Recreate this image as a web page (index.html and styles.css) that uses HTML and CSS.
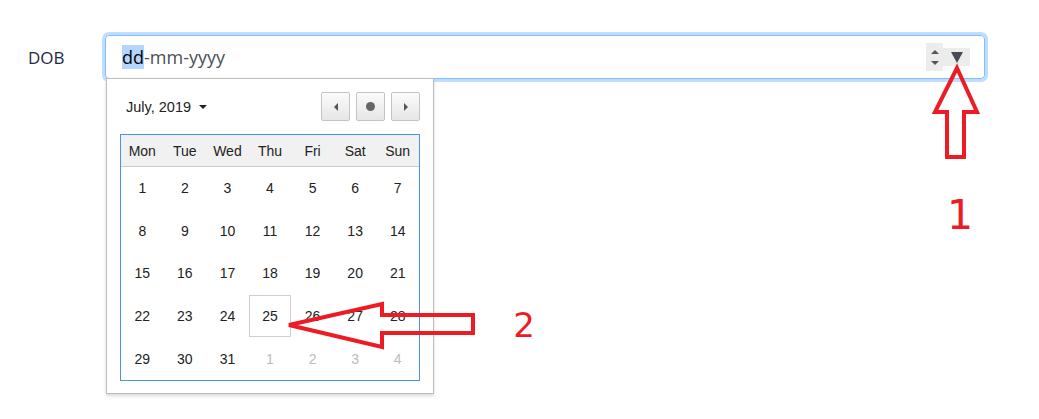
FILE: index.html
```html
<!DOCTYPE html>
<html lang="en">
<head>
  <meta charset="UTF-8">
  <title>DOB date picker</title>
  <link rel="stylesheet" href="styles.css">
</head>
<body>
<div class="page">

  <!-- date of birth field -->
  <div class="field-row">
    <label class="field-label">DOB</label>
    <div class="date-wrap">
      <div class="date-input">
        <span class="date-text"><span class="sel">dd</span>-mm-yyyy</span>
        <span class="spin"><i class="spin-up"></i><i class="spin-down"></i></span>
        <span class="drop"><i class="drop-arrow"></i></span>
      </div>

      <!-- calendar popup -->
      <div class="calendar">
        <div class="cal-head">
          <div class="cal-month">July, 2019 <i class="caret"></i></div>
          <div class="cal-nav">
            <button class="nav-btn"><i class="tri-left"></i></button>
            <button class="nav-btn"><i class="dot"></i></button>
            <button class="nav-btn"><i class="tri-right"></i></button>
          </div>
        </div>
        <div class="cal-grid">
          <div class="dow">Mon</div><div class="dow">Tue</div><div class="dow">Wed</div><div class="dow">Thu</div><div class="dow">Fri</div><div class="dow">Sat</div><div class="dow">Sun</div>
          <div class="day">1</div><div class="day">2</div><div class="day">3</div><div class="day">4</div><div class="day">5</div><div class="day">6</div><div class="day">7</div>
          <div class="day">8</div><div class="day">9</div><div class="day">10</div><div class="day">11</div><div class="day">12</div><div class="day">13</div><div class="day">14</div>
          <div class="day">15</div><div class="day">16</div><div class="day">17</div><div class="day">18</div><div class="day">19</div><div class="day">20</div><div class="day">21</div>
          <div class="day">22</div><div class="day">23</div><div class="day">24</div><div class="day today">25</div><div class="day">26</div><div class="day">27</div><div class="day">28</div>
          <div class="day">29</div><div class="day">30</div><div class="day">31</div><div class="day other">1</div><div class="day other">2</div><div class="day other">3</div><div class="day other">4</div>
        </div>
      </div>
    </div>
  </div>

  <!-- annotations -->
  <svg class="marks" width="1039" height="419" viewBox="0 0 1039 419">
    <polygon points="957,68 977,112 964,112 964,157 947,157 947,112 935,112" />
    <polygon points="289,325 382,304 382,315 473,315 473,333 382,333 382,347" />
    <text x="960" y="229" font-size="41">1</text>
    <text x="524" y="337" font-size="34">2</text>
  </svg>

</div>
</body>
</html>
```

FILE: styles.css
```css
body {
  margin: 0;
  background: #fff;
  font-family: "Open Sans", "Noto Sans", sans-serif;
}
.page {
  position: relative;
  height: 419px;
}
.field-row {
  display: flex;
  align-items: center;
  padding: 35px 0 0 28px;
}
.field-label {
  width: 77px;
  font-size: 17px;
  color: #1d2a44;
}
.date-wrap {
  position: relative;
  width: 880px;
}
.date-input {
  box-sizing: border-box;
  height: 44px;
  display: flex;
  align-items: center;
  padding: 0 14px 0 16px;
  border: 1px solid #80bdff;
  border-radius: 4px;
  box-shadow: 0 0 0 3px rgba(0, 123, 255, .25);
  font-size: 18px;
  color: #495057;
}
.date-text {
  flex: 1;
}
.sel {
  background: #b4d5fe;
  color: #000;
}
.spin {
  width: 17px;
  height: 28px;
  background: #ececec;
  display: flex;
  flex-direction: column;
  align-items: center;
  justify-content: center;
  gap: 7px;
}
.spin-up, .spin-down {
  width: 0;
  height: 0;
  border-left: 4px solid transparent;
  border-right: 4px solid transparent;
}
.spin-up {
  border-bottom: 4px solid #555;
}
.spin-down {
  border-top: 4px solid #555;
}
.drop {
  width: 27px;
  height: 18px;
  background: #ececec;
  display: flex;
  align-items: center;
  justify-content: center;
}
.drop-arrow {
  width: 0;
  height: 0;
  border-left: 6px solid transparent;
  border-right: 6px solid transparent;
  border-top: 11px solid #474c52;
}

/* calendar */
.calendar {
  position: absolute;
  left: 1px;
  top: 43px;
  width: 328px;
  box-sizing: border-box;
  padding: 13px 13px 12px;
  background: #fff;
  border: 1px solid #bdbdbd;
  box-shadow: 0 2px 3px rgba(0, 0, 0, .15);
  font-family: "Liberation Sans", Arial, sans-serif;
  font-size: 14px;
  color: #222;
}
.cal-head {
  display: flex;
  justify-content: space-between;
  align-items: center;
  height: 29px;
  margin-bottom: 13px;
}
.cal-month {
  padding-left: 6px;
  font-size: 14.5px;
  display: flex;
  align-items: center;
}
.caret {
  margin-left: 8px;
  width: 0;
  height: 0;
  border-left: 4px solid transparent;
  border-right: 4px solid transparent;
  border-top: 4px solid #222;
}
.cal-nav {
  display: flex;
  gap: 6px;
}
.nav-btn {
  width: 29px;
  height: 29px;
  padding: 0;
  border: 1px solid #c4c4c4;
  border-radius: 2px;
  background: linear-gradient(#fbfbfb, #e6e6e6);
  display: flex;
  align-items: center;
  justify-content: center;
}
.tri-left, .tri-right {
  width: 0;
  height: 0;
  border-top: 4px solid transparent;
  border-bottom: 4px solid transparent;
}
.tri-left {
  border-right: 4px solid #555;
}
.tri-right {
  border-left: 4px solid #555;
}
.dot {
  width: 9px;
  height: 9px;
  border-radius: 50%;
  background: #666;
}
.cal-grid {
  display: grid;
  grid-template-columns: repeat(7, 1fr);
  grid-template-rows: 32px repeat(5, 42.6px);
  border: 1px solid #4e90f2;
}
.dow {
  display: flex;
  align-items: center;
  justify-content: center;
  background: #f1f1f1;
  border-bottom: 1px solid #cbcbcb;
}
.day {
  display: flex;
  align-items: center;
  justify-content: center;
  box-sizing: border-box;
}
.day.today {
  border: 1px solid #cfcfcf;
}
.day.other {
  color: #bbb;
}

/* annotations */
.marks {
  position: absolute;
  left: 0;
  top: 0;
  pointer-events: none;
}
.marks polygon {
  fill: none;
  stroke: #ed1c24;
  stroke-width: 4;
  stroke-linejoin: miter;
}
.marks text {
  fill: #ed1c24;
  font-family: "DejaVu Sans", sans-serif;
  text-anchor: middle;
}
```
